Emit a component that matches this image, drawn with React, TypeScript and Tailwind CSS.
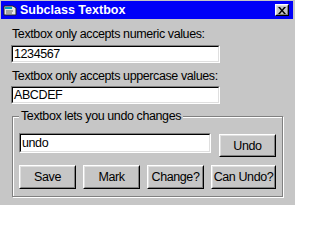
import type { ReactNode } from "react";

function Sunken({ className, children }: { className: string; children: ReactNode }) {
  return (
    <div
      className={`border border-t-[#808080] border-l-[#808080] border-r-white border-b-white ${className}`}
    >
      <div className="flex h-full items-center border border-t-black border-l-black border-r-[#dfdfdf] border-b-[#dfdfdf] bg-white pl-[1px]">
        {children}
      </div>
    </div>
  );
}

function Btn({ className, children }: { className: string; children: ReactNode }) {
  return (
    <div
      className={`border border-t-white border-l-white border-r-black border-b-black bg-[#c6c6c6] ${className}`}
    >
      <div className="flex h-full items-center justify-center border border-t-[#dfdfdf] border-l-[#dfdfdf] border-r-[#808080] border-b-[#808080]">
        {children}
      </div>
    </div>
  );
}

function FormIcon() {
  return (
    <svg width="14" height="12" viewBox="0 0 14 12">
      <path d="M1 2h9l3 2v7H1z" fill="#e8e8e8" stroke="#202020" strokeWidth="1" />
      <rect x="2" y="3" width="7" height="2" fill="#00a0c0" />
      <path d="M3 7h7M3 9h6" stroke="#606060" strokeWidth="1" />
    </svg>
  );
}

function CloseGlyph() {
  return (
    <svg width="8" height="7" viewBox="0 0 8 7" className="block">
      <path d="M0 0h2l2 2.4L6 0h2L5 3.5 8 7H6L4 4.6 2 7H0l3-3.5z" fill="#000" />
    </svg>
  );
}

export default function App() {
  return (
    <div className="flex h-[205px] w-[295px] flex-col bg-[#c6c6c6] pl-[1px] pt-[1px] font-['Liberation_Sans',Arial,sans-serif] text-[12.5px] leading-[14px] tracking-[-0.4px] text-black">
      {/* title bar */}
      <div className="flex h-[18px] w-[292px] items-center bg-[#0000f8]">
        <div className="ml-[2px] flex">
          <FormIcon />
        </div>
        <span className="ml-[3px] text-[12.5px] font-bold tracking-[0px] text-white">
          Subclass Textbox
        </span>
        <Btn className="ml-auto mr-[4px] h-[12px] w-[14px]">
          <CloseGlyph />
        </Btn>
      </div>

      <div className="flex flex-col pl-[10px]">
        <div className="mt-[8px] pl-[1px]">Textbox only accepts numeric values:</div>
        <Sunken className="mt-[4px] h-[18px] w-[209px]">1234567</Sunken>
        <div className="mt-[6px] pl-[1px]">Textbox only accepts uppercase values:</div>
        <Sunken className="mt-[3px] h-[18px] w-[209px]">ABCDEF</Sunken>
      </div>

      <fieldset className="ml-[11px] mt-[5px] w-[271px] border border-[#808080] px-[6px] pb-[7px] pt-[10px] shadow-[inset_1px_1px_0_#fff,1px_1px_0_#fff]">
        <legend className="bg-[#c6c6c6] px-[2px]">Textbox lets you undo changes</legend>
        <div className="flex items-start">
          <Sunken className="h-[20px] w-[192px]">undo</Sunken>
          <Btn className="ml-[8px] mt-[1px] h-[23px] w-[57px]">Undo</Btn>
        </div>
        <div className="mt-[8px] flex gap-[7px]">
          <Btn className="h-[24px] w-[57px]">Save</Btn>
          <Btn className="h-[24px] w-[57px]">Mark</Btn>
          <Btn className="h-[24px] w-[57px]">Change?</Btn>
          <Btn className="h-[24px] w-[65px]">Can Undo?</Btn>
        </div>
      </fieldset>
    </div>
  );
}
